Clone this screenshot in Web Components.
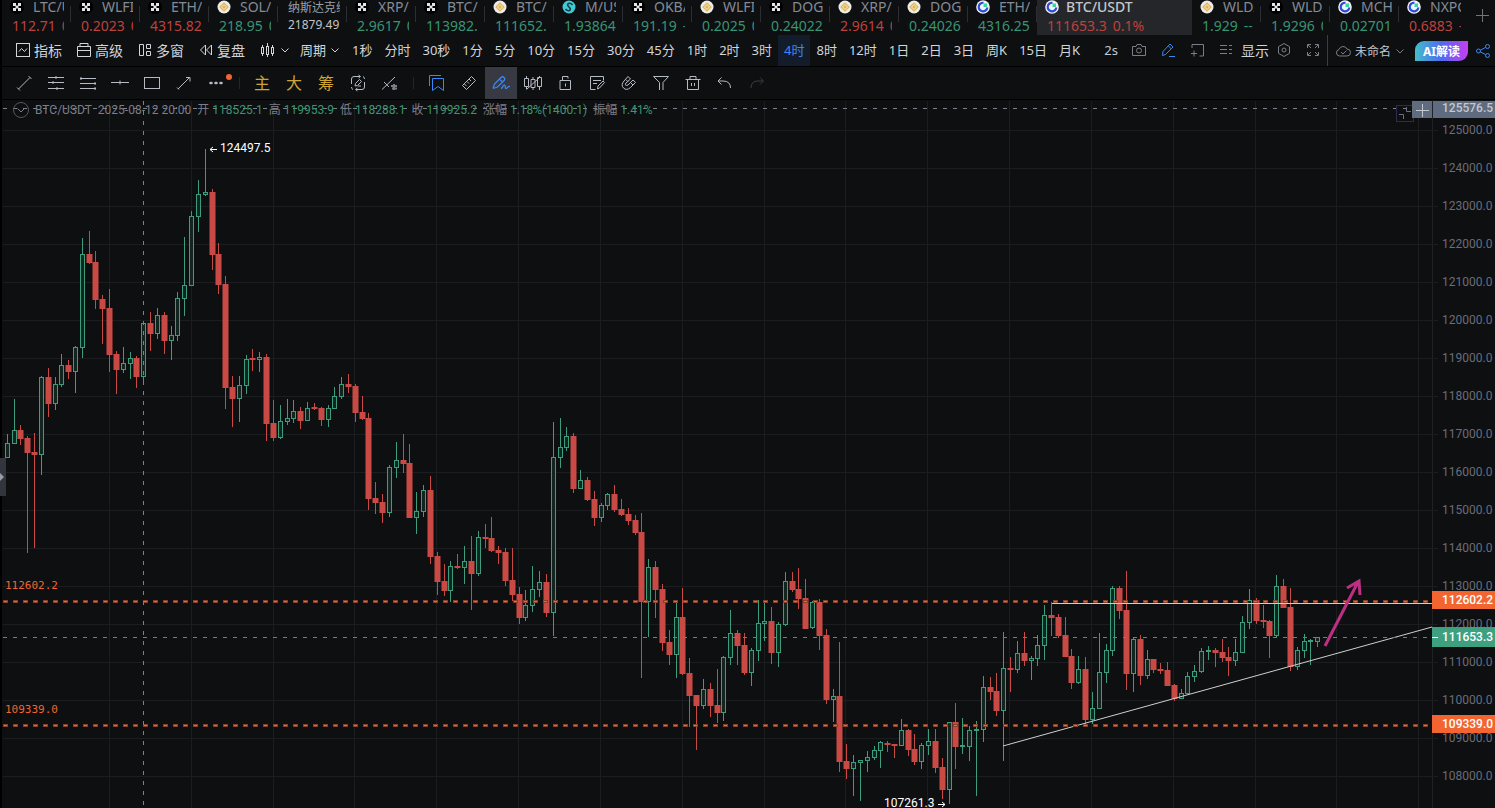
<!DOCTYPE html>
<html lang="zh-CN">
<head>
<meta charset="utf-8">
<title>BTC/USDT 4时</title>
<style>
html,body{margin:0;height:100%;background:#0d0f11}
body{font-family:"Noto Sans","Noto Sans CJK SC",sans-serif;color:#d2d5da;overflow:hidden}
</style>
</head>
<body>
<trade-app></trade-app>
<script>
const ICONS = {
  indicator:'<rect x="1.5" y="1.5" width="13" height="13"/><path d="M4 9.500l2.500-3 3 3 2.500-3"/>',
  advanced:'<path d="M1.500 4.500h13v10h-13zM4 4.500V1.500h8v3M1.500 8.500h13"/>',
  windows:'<path d="M2.500 2.500h4v11h-4zM9.500 2.500h4v4h-4zM9.500 9.500h4v4h-4z"/>',
  replay:'<path d="M7.500 3v10L2.500 8zM13.500 3v10L8.500 8z"/>',
  candles:'<path d="M3.500 3v11M8.500 1v14M13.500 3v11"/><rect x="2.500" y="5.500" width="2" height="6" fill="#0d0f11"/><rect x="7.500" y="4.500" width="2" height="8" fill="#0d0f11"/><rect x="12.500" y="5.500" width="2" height="6" fill="#0d0f11"/>',
  camera:'<path d="M1.500 4.500h3.500l1-2h4l1 2h3.500v9h-13z"/><circle cx="8" cy="8.500" r="2.500"/>',
  pencil:'<path d="M2.500 13.500l.500-4 7-7.500 3 3-7.500 7.500zM8.500 4l3 3M9 14.500h6"/>',
  frame:'<path d="M3 6V2.500h11.500v11.500H10.500M2 11.500h6M5 8.500v6"/>',
  menu:'<path d="M2 3.500h7M2 7.500h7M2 11.500h7M11 3.500h3M11 7.500h3M11 11.500h3"/>',
  hexagon:'<path d="M8 1.500l5.500 3.200v6.600L8 14.500l-5.500-3.200V4.700z"/><circle cx="8" cy="8" r="2"/>',
  fullscreen:'<path d="M2.500 6V2.500H6M3 3l3 3M10 2.500h3.500V6M13 3l-3 3M2.500 10v3.500H6M3 13l3-3M10 13.500h3.500V10M13 13l-3-3"/>',
  cloud:'<path d="M4.500 13a3.300 3.300 0 0 1-.500-6.500 4.300 4.300 0 0 1 8-.500 3.500 3.500 0 0 1 0 7z"/><path d="M6 9l2 2 3.500-3.500"/>',
  share:'<circle cx="3.500" cy="8" r="2"/><circle cx="12.500" cy="3.500" r="2"/><circle cx="12.500" cy="12.500" r="2"/><path d="M5.300 7.200l5.400-2.800M5.300 8.900l5.400 2.700"/>',
  chevron:'<path d="M4.500 6.500L8 10l3.500-3.500"/>',
  plus:'<path d="M8.500 2v13M2 8.500h13"/>',
  segment:'<path d="M2.500 14L14 2.500"/><path d="M1 12.500l3 3M12.500 1l3 3" opacity=".9"/>',
  parallel:'<path d="M0 2.500h16M0 7.500h16M0 13.500h16M8 1v3M5 6v3M9 12v3" />',
  levels:'<path d="M0 3.500h16M0 8.500h16M0 13.500h16M1 2v3M15 7v3M15 12v3" />',
  hline:'<path d="M-1 7.500h18M8 5.500v4"/>',
  rect:'<rect x="0.500" y="2.500" width="15" height="11"/>',
  arrowline:'<path d="M2 14L14 2M10 2.500h4v4M1 12.500l2 2"/>',
  dots:'<path d="M2.500 8h1M7.500 8h1M12.500 8h1" stroke-width="2.500" stroke-linecap="round"/>',
  cycle:'<path d="M1.500 9V4q0-2.500 2.500-2.500h6M8.500 0l2 1.500-2 1.500M14.500 7v5q0 2.500-2.500 2.500H6M7.500 13l-2 1.500 2 1.500M13 1.500q1.500.500 1.500 2.500M1.500 12q0 2 1.500 2.500"/><path d="M5 11l.500-2.500L9.500 4.500l2 2-4 4zM8 11h3"/>',
  linegear:'<path d="M0 14.500L13 2M2 7l5 5"/><path d="M9 11h6M10 13.500h5M12 9v6" stroke-width="2" opacity=".65"/>',
  bookmark:'<path d="M.500 11V.500H12M3.500 3.500h11v12L9 11.500l-5.500 4z"/>',
  ruler:'<path d="M1.500 10.500l9-9 4 4-9 9zM8 4l2 2M6 6.500l2 2M3.500 9l2 2"/>',
  draw:'<path stroke-width="1.300" d="M0 13.500L1.500 9 8 2.500q1.500-1.500 3 0t0 3L4.500 12 0 13.500M6.500 4l3 3M8 13.500c2-.500 2-4 3.500-3.500s0 3.500 1.500 3.500 1.500-2.500 4-2"/>',
  kpattern:'<path d="M1.500 3.500v-2.500M1.500 11.500v3M8 2v2.500M8 12.500v2.500M14.500 1v2M14.500 12v3M-.500 3.500h4v8h-4zM6 4.500h4v8h-4zM12.500 2.500h4v9h-4zM2 14L14 3"/>',
  lock:'<path d="M3 5.500h10.500v9H3zM5.500 5.500v-4h5.500v2M8.500 8.500v3"/>',
  note:'<path d="M6.500 14.500h-5v-13h13v4M4 5.500h8M4 8.500h4M8.500 14l.500-3 5-5 1.500 1.500-5 5.500z"/>',
  magnet:'<path d="M7 1.500L3 6q-3.500 4-.5 7t7-.5l5-5-2.500-2.500-5 5q-1.500 1-2.300.200T5 8L9.500 4zM4.800 4.500l2.500 2.500M9.500 7.500l2.500 2.500"/>',
  filter:'<path d="M.500 1.500h15L10 7.500V15M.500 1.500L6.500 7.500V15"/>',
  trash:'<path d="M.500 4.500h15M5 4V1.500h6V4M2.500 4.500v10h11v-10M6.500 8v3M9.500 8v3"/>',
  undo:'<path d="M4.500 2.500L1 6 4.500 9.500M1.500 6H6q7.500 0 7.500 7"/>',
  redo:'<path d="M11 2.500L14.500 6 11 9.500M14 6H9q-7 0-7 7"/>'
};
const COINS = {
  okx:'<circle cx="7" cy="7" r="7" fill="#000"/><path fill="#e6e6e6" d="M3 3h3v3H3zM8 3h3v3H8zM5.500 5.500h3v3h-3zM3 8h3v3H3zM8 8h3v3H8z"/>',
  gold:'<circle cx="7" cy="7" r="6.500" fill="#ececea"/><path fill="#e3b552" d="M7 2.200l4.800 4.800L7 11.800 2.200 7z"/><path d="M4.500 7L7 4.500 9.500 7 7 9.500z" fill="none" stroke="#f5ead0"/>',
  teal:'<circle cx="7" cy="7" r="6.500" fill="#42c9d6"/><path d="M10.500 5q-2-2.500-4-1.500T7 7t.500 3.500T3.500 9" fill="none" stroke="#173b46" stroke-width="1.600"/>',
  gate:'<circle cx="7" cy="7" r="6.800" fill="#f1f3fb"/><path d="M7.500 2.800A4.300 4.300 0 1 0 11.300 7.500" fill="none" stroke="#2b4bd8" stroke-width="2.200"/><rect x="7.500" y="3.500" width="3.500" height="3.500" fill="#3ad6a0"/>'
};
const define = (name, css, html) => customElements.define(name, class extends HTMLElement {
  constructor(){
    super();
    this.attachShadow({mode:'open'}).innerHTML = `<style>${css}</style>` + (typeof html === 'function' ? html(this) : html);
  }
});
const RESET = 'button{all:unset;box-sizing:border-box;cursor:pointer;display:flex;align-items:center;white-space:nowrap}';

define('ui-icon', ':host{display:block;width:16px;height:16px;flex:none}svg{display:block;overflow:visible}',
  el => `<svg width="16" height="16" fill="none" stroke="currentColor" aria-hidden="true">${ICONS[el.getAttribute('name')]}</svg>`);

define('market-tab', `
:host{display:block;width:69px;flex:none;height:35px;position:relative}
:host([active]){width:155px;background:#25262a;color:#c9ccd1}
:host(:not([active]):not([last]))::after{content:"";position:absolute;right:0;top:6px;height:16px;width:1px;background:#2c2e33}
${RESET}
button{display:block;width:100%;height:35px;padding:0 7px 0 10px}
.clip{overflow:hidden;display:flex;height:18px;line-height:18px;font-size:14px}
.name{margin:-3px 0 0 -2px;color:#858b96;gap:9px}
:host([active]) .name{color:#c3c6cb;font-weight:500;gap:7px}
.coin{flex:none;margin-top:2px}
.price{margin-top:1px;gap:6px;color:#3a9375}
:host([down]) .price{color:#bd423e}
:host([plain]) .name,:host([plain]) .price{font-size:12px;color:#9c9fa5;margin-left:0}
:host([plain]) .price{color:#c3c5c8;margin-top:-1px}
`, el => {
  const a = n => el.getAttribute(n);
  return `<button type="button"><span class="clip name">${a('coin') ? `<svg class="coin" width="14" height="14" aria-hidden="true">${COINS[a('coin')]}</svg>` : ''}<span>${a('name')}</span></span>
  <span class="clip price"><span>${a('price')}</span>${a('more') ? `<span>${a('more')}</span>` : ''}</span></button>`;
});

const TABS = [
 ['okx','LTC/U','112.71','0',1],['okx','WLFI','0.2023','0',1],['okx','ETH/','4315.82','',1],['gold','SOL/','218.95','0',0],
 ['','纳斯达克综','21879.49','0',2],['okx','XRP/U','2.9617','0',0],['okx','BTC/U','113982.','',0],['gold','BTC/U','111652.','',0],
 ['teal','M/US','1.93864','',0],['okx','OKB/','191.19','-',0],['gold','WLFI','0.2025','0',0],['okx','DOGE','0.24022','',0],
 ['gold','XRP/U','2.9614','0',1],['gold','DOGE','0.24026','',0],['gate','ETH/','4316.25','',0],['gate','BTC/USDT','111653.3','0.1%',3],
 ['gold','WLD/','1.929','--',0],['okx','WLD/','1.9296','0',0],['gate','MCH','0.02701','',0],['gate','NXPC','0.6883','-',1]];
define('market-tabs', `
:host{display:flex;height:35px;padding-left:2px;overflow:hidden;box-shadow:inset 2px 0 #000}
${RESET}
.add{margin-left:auto;width:32px;height:29px;justify-content:center;color:#6f747d}
`, () => TABS.map((t,i) => `<market-tab ${t[0]?`coin="${t[0]}"`:''} name="${t[1]}" price="${t[2]}" more="${t[3]}" ${t[4]&1?'down':''} ${t[4]===2?'plain':''} ${t[4]===3?'active':''} ${i===TABS.length-1?'last':''}></market-tab>`).join('')
 + '<button class="add" type="button" aria-label="添加"><ui-icon name="plus"></ui-icon></button>');

const tool = (icon, text='', cls='') => `<button type="button" class="${cls}" ${text?'':`aria-label="${icon}"`}><ui-icon name="${icon}"></ui-icon>${text?`<span>${text}</span>`:''}</button>`;
const PERIODS = '1秒 分时 30秒 1分 5分 10分 15分 30分 45分 1时 2时 3时 4时 8时 12时 1日 2日 3日 周K 15日 月K'.split(' ');
define('period-toolbar', `
:host{display:flex;align-items:center;height:31px;box-sizing:content-box;border-bottom:1px solid #000;font-size:13px;padding:0 4px 0 15px;box-shadow:inset 2px 0 #000}
${RESET}
.tools,.right,.view,.file,.combo{display:flex;align-items:center}
.tools{gap:14px;font-size:14px}
.tools,.right,.cycle{padding-bottom:2px}
.tools button{gap:3px}
.tools .combo{gap:2px}
.combo ui-icon+ui-icon,.cycle ui-icon{width:12px}
.cycle{margin-left:11px;gap:1px}
.periods{display:flex;margin-left:7px;height:31px}
.periods button{padding:0 6px 2px}
.periods button[aria-pressed=true]{background:#131c2b;color:#3d86f6}
.right{margin-left:auto;gap:13px;color:#7a7e88}
.right .s{color:#c5c8ce}
.view{gap:7px}.view .t{font-size:14px;color:#d2d5da}
.blue{color:#3d86f6}
.divider{width:1px;height:31px;background:#3a3c41;margin:0 7px 0 6px}
.file{font-size:12px;color:#7a7e88}.file span{color:#c5c8ce;margin:0 1px 0 4px}
.ai{margin:0 7px;width:53px;height:20px;justify-content:center;font-size:12px;font-weight:700;color:#fff;border-radius:9px 0 9px 0;background:linear-gradient(90deg,#43bdc9,#4f6bf0 50%,#c63df2)}
`, `<div class="tools">${tool('indicator','指标')}${tool('advanced','高级')}${tool('windows','多窗')}${tool('replay','复盘')}
<button type="button" class="combo" aria-label="K线样式"><ui-icon name="candles"></ui-icon><ui-icon name="chevron"></ui-icon></button></div>
<button type="button" class="cycle"><span>周期</span><ui-icon name="chevron"></ui-icon></button>
<div class="periods">${PERIODS.map(p=>`<button type="button" aria-pressed="${p==='4时'}">${p}</button>`).join('')}</div>
<div class="right"><button type="button" class="s">2s</button>${tool('camera')}${tool('pencil','','blue')}${tool('frame')}
<div class="view">${tool('menu')}<button type="button" class="t">显示</button>${tool('hexagon')}</div>${tool('fullscreen')}</div>
<div class="divider"></div>
<div class="file"><button type="button"><ui-icon name="cloud"></ui-icon><span>未命名</span><ui-icon name="chevron"></ui-icon></button></div>
<button type="button" class="ai">AI解读</button>${tool('share','','blue')}`);

define('draw-toolbar', `
:host{display:flex;align-items:center;height:32px;border-bottom:1px solid #000;padding-left:8px;color:#b5bac3;box-shadow:inset 2px 0 #000}
${RESET}
button{width:32px;height:32px;justify-content:center;position:relative}
.sep{width:1px;height:12px;margin:0 6px 0 7px;background:#2a2320}
.sep+button:not(.gold){margin-left:1px}
.gold{color:#cfa534;font-size:16px;padding-bottom:2px}
.blue{color:#3d86f6}
.on{color:#3d86f6;background:#373a42}
.off{color:#3a3d42}
.new::after{content:"";position:absolute;right:0;top:7px;width:6px;height:6px;border-radius:50%;background:#f26430}
`, ['segment','parallel','levels','hline','rect','arrowline'].map(n=>tool(n)).join('') + tool('dots','','new') + '<span class="sep"></span>'
 + ['主','大','筹'].map(t=>`<button type="button" class="gold">${t}</button>`).join('') + tool('cycle') + tool('linegear') + '<span class="sep"></span>'
 + tool('bookmark','','blue') + tool('ruler') + tool('draw','','on') + ['kpattern','lock','note','magnet','filter','trash','undo'].map(n=>tool(n)).join('') + tool('redo','','off'));

/* candle rows: direction, high, body top, body bottom, low (chart units) */
const DATA = `g434,443,458,458 g399,430,444,444 r425,430,439,445 r436,438,453,553 r433,452,455,548 g376,377,455,475 r368,377,404,417 g377,384,404,410 g354,365,385,387 r360,365,372,379 g346,347,372,393 g238,254,348,358 r231,254,263,264 r251,262,300,309 r295,299,309,344 r289,308,355,372 r351,354,370,394 g347,363,370,373 g352,358,364,379 r356,358,377,388 g322,323,377,385 r312,323,334,351 g308,315,334,339 r312,315,341,354 g326,335,341,360 g292,298,336,341 g237,285,299,316 g211,216,286,286 g180,194,217,232 g149,192,195,196 r189,192,255,270 r243,254,285,294 r276,284,388,409 r376,387,399,427 g376,385,399,422 g355,359,386,394 r349,358,360,371 g352,357,360,372 r354,357,424,441 r400,423,438,441 g405,421,438,439 g399,418,422,425 g400,411,419,423 r407,411,421,429 g402,408,421,421 r403,407,409,410 r407,408,420,426 g405,408,420,427 g387,396,409,409 g377,384,397,399 r374,384,387,393 r384,386,413,422 r396,412,419,420 r413,418,499,510 r482,498,503,514 r494,502,513,523 g465,467,513,517 g442,460,468,478 r434,460,464,473 r444,463,518,518 g492,511,518,534 g485,490,512,517 r476,490,557,564 r552,556,582,595 r564,581,591,596 g561,566,591,602 r554,566,568,569 g546,561,568,584 r536,561,574,610 g531,537,574,576 r524,537,539,548 r517,538,551,552 r546,550,553,564 r548,552,581,586 r548,580,595,601 r587,594,618,624 g590,605,618,621 g566,589,606,612 g571,582,590,597 r574,582,613,617 g422,457,613,636 g418,447,458,468 g427,436,448,451 r433,436,489,493 g470,480,489,489 r477,480,500,501 r491,499,518,526 g503,505,518,522 g493,494,506,510 r485,494,510,512 r499,509,515,516 r508,514,521,525 r515,520,533,535 r513,532,602,678 g559,567,602,637 r561,567,590,618 r584,589,643,651 r630,642,655,665 g602,617,655,678 r588,617,674,675 r658,673,696,727 r695,695,706,750 g679,689,706,709 r683,689,706,717 r669,705,713,723 g656,657,713,721 g610,633,658,665 r630,633,646,665 r633,645,673,675 g648,650,673,686 g600,623,651,661 g602,621,624,641 r607,621,653,664 g622,624,653,667 g572,581,625,626 r572,581,590,592 r568,589,599,609 r579,598,629,629 g601,602,628,629 r599,602,636,650 r629,635,700,704 g689,696,700,722 r642,696,762,772 r744,761,769,779 g755,762,769,796 g760,760,763,801 g751,757,761,772 g746,750,758,760 g741,742,751,768 r741,743,745,752 r744,744,746,758 g719,730,746,746 r729,730,750,756 r734,749,762,765 g743,745,762,769 g729,741,746,755 r729,741,768,773 r758,767,790,799 g722,722,790,804 r703,722,747,769 g718,745,747,754 g726,730,747,761 g721,729,731,796 g676,687,730,742 r677,687,692,700 r673,691,711,716 g632,668,711,761 r657,668,670,692 g641,653,670,673 r632,653,661,666 g656,658,661,680 g635,645,659,666 g605,615,646,660 r602,615,618,636 r614,617,636,638 r617,635,657,657 r649,656,683,689 g656,669,683,684 r657,669,720,724 g692,708,720,724 g633,672,709,709 g644,650,673,683 g586,588,651,656 r586,588,611,619 r571,610,674,690 g638,639,674,692 r635,639,676,685 g650,659,676,679 r659,659,670,673 r663,669,671,674 r662,670,686,686 r684,685,699,701 g689,693,699,699 g672,676,694,694 g665,671,677,682 g648,651,672,673 g646,650,652,660 r648,650,653,667 r639,652,658,662 r647,657,661,676 g639,652,661,666 g616,622,653,653 g589,600,623,629 r598,600,621,624 r605,620,622,628 r620,621,636,658 g575,586,636,638 r579,586,608,608 r588,607,667,671 g647,650,667,670 g634,641,651,658 g639,640,642,665 g637,637,642,647`;
const STEP = 6.825, FIRST = 7.25, TOP = 100;

function candles(){
  return DATA.split(' ').map((row,i) => {
    const x = Math.floor(FIRST + STEP*i), [hi,t,b,lo] = row.slice(1).split(',').map(Number);
    if (row[0]==='r') return `<path stroke="#c94a44" d="M${x+.5} ${hi}V${lo}"/><rect fill="#c94a44" x="${x-2.5}" y="${t}" width="6" height="${Math.max(1,b-t)}"/>`;
    return `<path stroke="#3d9c7c" d="M${x+.5} ${hi}V${t}M${x+.5} ${b}V${lo}"/><rect fill="#11261f" stroke="#3d9c7c" x="${x-1.5}" y="${t+.5}" width="4" height="${Math.max(1,b-t-1)}"/>`;
  }).join('');
}
function grid(){
  let s = '';
  for (let k=0;k<18;k++) s += `<path d="M3 ${130.5+38*k}H4000"/>`;
  for (let k=0;k<40;k++) s += `<path d="M${Math.floor(109.4+81.83*k)+.5} 101V4000"/>`;
  return s;
}

define('chart-plot', ':host{display:block;overflow:hidden;position:relative}svg{display:block;width:100%;height:100%;position:absolute;inset:0}text{font-family:Roboto,sans-serif;font-size:12px}.lv{font-family:"DejaVu Sans Mono",monospace;font-size:11px}', () => `
<svg role="img" aria-label="BTC/USDT K线"><g transform="translate(0,-${TOP})">
<path fill="#000" d="M0 0h2v4000H0z"/>
<g stroke="#1b1d20">${grid()}</g>
${candles()}
<g fill="none">
<path stroke="#cfcfcf" d="M1052 603.500H4000M1003 746L1432 627"/>
<path stroke="#8a3f24" stroke-width="3" stroke-dasharray="5 5" d="M3 601.500H4000M3 725.500H4000"/>
<path stroke="#f06a35" stroke-dasharray="3 7" d="M4 601.500H4000M4 725.500H4000"/>
<path stroke="#3d9c7c" stroke-dasharray="4 6" d="M3 637.500H4000"/>
<path stroke="#7d818c" stroke-dasharray="4 6" d="M3 108.500H4000M143.500 101V4000"/>
<path stroke="#bd2f83" stroke-width="3" d="M1325 646L1358 582M1347 588L1359 581 1360 595"/>
<path stroke="#fff" d="M210 149.500h7M213 147l-3 2.500 3 2.500M938 804.500h7M942 802l3 2.500-3 2.500"/>
</g>
<g fill="#fff"><text x="220" y="152">124497.5</text><text x="884" y="807">107261.3</text></g>
<g fill="#f26430"><text class="lv" x="5" y="589">112602.2</text><text class="lv" x="5" y="713">109339.0</text></g>
</g></svg>`);

define('chart-legend', `
:host{display:flex;align-items:center;gap:6px;height:18px;font-family:Roboto,"Noto Sans CJK SC",sans-serif;font-size:12px;line-height:18px;color:#7b7d88;white-space:nowrap}
${RESET}
button{width:16px;height:16px;border:1px solid #55575f;border-radius:50%;justify-content:center;box-sizing:border-box}
.pair{display:flex;gap:3px;align-items:baseline}.pair b{font-weight:400;color:#38966f}
`, '<button type="button" aria-label="收起"><ui-icon name="chevron"></ui-icon></button><span>BTC/USDT</span><span>2025-08-12 20:00</span>' +
 [['开','118525.1'],['高','119953.9'],['低','118288.1'],['收','119925.2'],['涨幅','1.18%(1400.1)'],['振幅','1.41%']].map(([k,v])=>`<span class="pair"><span>${k}</span><b>${v}</b></span>`).join(''));

define('price-axis', `
:host{display:flex;flex-direction:column;position:relative;box-sizing:border-box;box-shadow:inset 1px 0 #1f2124;padding-top:11px;font-family:Roboto,sans-serif;font-size:12px;color:#6b6c7b;overflow:hidden}
.row{height:38px;line-height:38px;flex:none;padding-left:10px}
.row::before{content:"";float:left;width:6px;height:1px;background:#1b1d20;margin:19px 0 0 -10px}
.tag{position:absolute;left:0;right:0;height:18px;line-height:18px;padding-left:10px;color:#fff;font-weight:500;background:#f26430}
.cur{background:#3fa07f;height:20px;line-height:20px}
.cur::before{content:"";position:absolute;left:0;top:10px;width:6px;height:1px;background:#fff}
.cross{left:1px;padding-left:9px;background:#5f6b7f;color:#c3c7ce;height:17px;line-height:14px}
`, Array.from({length:18},(_,i)=>`<div class="row">${125000-1000*i}.0</div>`).join('') +
 '<div class="tag cross" style="top:1px">125576.5</div><div class="tag" style="top:491px">112602.2</div><div class="tag cur" style="top:527px">111653.3</div><div class="tag" style="top:615px">109339.0</div>');

define('price-chart', `
:host{display:grid;grid-template-columns:minmax(0,1fr) 63px;position:relative;min-height:0;overflow:hidden}
${RESET}
chart-legend{position:absolute;left:13px;top:1px}
.restore{position:absolute;right:81px;top:5px;width:18px;height:17px;border:1px solid #2b2d50;color:#6d7080}
.plus{position:absolute;right:63px;top:1px;width:20px;height:17px;background:#5f6b7f;color:#c3c7ce;justify-content:center}
.handle{position:absolute;left:0;top:358px;width:6px;height:38px;background:#33353c;color:#9a9da5}
`, `<chart-plot></chart-plot><price-axis></price-axis><chart-legend></chart-legend>
<button type="button" class="restore" aria-label="还原"><svg width="16" height="15" fill="none" stroke="currentColor"><path d="M9.500 1v4.500H14M2 8.500h4.500V13"/></svg></button>
<button type="button" class="plus" aria-label="添加提醒"><ui-icon name="plus"></ui-icon></button>
<button type="button" class="handle" aria-label="展开"><svg width="6" height="10" fill="currentColor"><path d="M0 1l4 4-4 4z"/></svg></button>`);

define('trade-app', ':host{display:grid;grid-template-rows:auto auto auto minmax(0,1fr);height:100vh;background:#0d0f11}',
 '<market-tabs></market-tabs><period-toolbar></period-toolbar><draw-toolbar></draw-toolbar><price-chart></price-chart>');
</script>
</body>
</html>
